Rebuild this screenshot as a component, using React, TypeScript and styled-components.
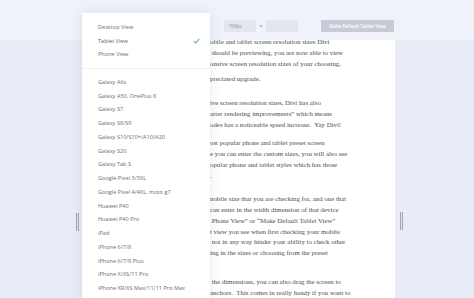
import React from "react";
import styled, {createGlobalStyle} from "styled-components";

const GlobalStyle = createGlobalStyle`
  html, body {
    margin: 0;
    padding: 0;
    width: 474px;
    height: 298px;
    overflow: hidden;
    background: #eef1f8;
  }
`

const Screen = styled.div`
  position: relative;
  width: 474px;
  height: 298px;
  display: flex;
  flex-direction: column;
  overflow: hidden;
  font-family: "Open Sans", "Liberation Sans", sans-serif;
`

const Toolbar = styled.div`
  flex: 0 0 40px;
  box-sizing: border-box;
  padding: 20px 0 0 224px;
  display: flex;
  align-items: flex-start;
  background: #eff2f8;
`

const SizeInput = styled.div`
  width: 32px;
  height: 12px;
  box-sizing: border-box;
  padding-left: 5px;
  display: flex;
  align-items: center;
  background: #e3e6ed;
  color: #8c909b;
  font-size: 4.5px;
`

const Times = styled.span`
  width: 10px;
  line-height: 12px;
  text-align: center;
  color: #7d818c;
  font-size: 6px;
`

const DefaultButton = styled.button`
  margin-left: 23px;
  width: 73px;
  height: 12px;
  padding: 0;
  border: 0;
  background: #c8cbd7;
  color: #ffffff;
  font-family: "Open Sans", "Liberation Sans", sans-serif;
  font-size: 4.6px;
  font-weight: 600;
`

const Stage = styled.div`
  flex: 1;
  min-height: 0;
  display: flex;
`

const Gutter = styled.div<{ $side: "left" | "right" }>`
  flex: ${p => p.$side === "left" ? "0 0 84px" : "1"};
  box-sizing: border-box;
  display: flex;
  align-items: flex-start;
  justify-content: ${p => p.$side === "left" ? "flex-end" : "flex-start"};
  padding: ${p => p.$side === "left" ? "173px 5px 0 0" : "172px 0 0 5px"};
  background: #e8ecf7;
`

const Handle = styled.div`
  width: 3px;
  height: 18px;
  box-sizing: border-box;
  border-left: 1px solid #a3a9b5;
  border-right: 1px solid #a3a9b5;
  background: #dde1ea;
`

const Frame = styled.div`
  flex: 0 0 311px;
  background: #ffffff;
`

const Article = styled.div`
  margin-top: -3px;
  padding-left: 126px;
  font-family: "Liberation Serif", "Times New Roman", serif;
  font-size: 6.85px;
  line-height: 10.9px;
  color: #4e4e4e;
`

const Paragraph = styled.p<{ $gap: number }>`
  margin: ${p => p.$gap}px 0 0;
  white-space: pre;
`

const Dropdown = styled.div`
  position: absolute;
  left: 82px;
  top: 13px;
  bottom: -10px;
  width: 128px;
  box-sizing: border-box;
  padding-top: 7px;
  background: #ffffff;
  box-shadow: 0 0 10px rgba(60, 80, 130, 0.12);
`

const Item = styled.div<{ $active?: boolean }>`
  height: 13.75px;
  box-sizing: border-box;
  padding: 0 10px 0 16px;
  display: flex;
  align-items: center;
  font-size: 5.6px;
  color: ${p => p.$active ? "#626262" : "#6e6e6e"};
  white-space: nowrap;
`

const Check = styled.svg`
  margin-left: auto;
  width: 7px;
  height: 6px;
`

const Divider = styled.div`
  height: 1px;
  margin: 6.4px 0 6.35px;
  background: #f0f1f3;
`

const views = ["Desktop View", "Tablet View", "Phone View"]

const devices = [
    "Galaxy A6s",
    "Galaxy A50, OnePlus 8",
    "Galaxy S7",
    "Galaxy S8/S9",
    "Galaxy S10/S10+/A10/A20",
    "Galaxy S20",
    "Galaxy Tab S",
    "Google Pixel 3/3XL",
    "Google Pixel 4/4XL, moto g7",
    "Huawei P40",
    "Huawei P40 Pro",
    "iPad",
    "iPhone 6/7/8",
    "iPhone 6/7/8 Plus",
    "iPhone X/XS/11 Pro",
    "iPhone XR/XS Max/11/11 Pro Max",
]

const paragraphs: { gap: number, lines: string[] }[] = [
    {
        gap: 0, lines: [
            "obile and tablet screen resolution sizes Divi",
            " should be previewing, you are now able to view",
            "onsive screen resolution sizes of your choosing.",
        ]
    },
    {gap: 4.4, lines: ["preciated upgrade."]},
    {
        gap: 13.1, lines: [
            "ive screen resolution sizes, Divi has also",
            "arter rendering improvements\u201d which means",
            "odes has a noticeable speed increase.  Yay Divi!",
        ]
    },
    {
        gap: 7.3, lines: [
            "ost popular phone and tablet preset screen",
            "e you can enter the custom sizes, you will also see",
            "opular phone and tablet styles which has those",
            ".",
        ]
    },
    {
        gap: 12.1, lines: [
            "nobile size that you are checking for, and one that",
            "can enter in the width dimension of that device",
            " Phone View\u201d or \u201cMake Default Tablet View\u201d",
            "t view you see when first checking your mobile",
            " not in any way hinder your ability to check other",
            "ing in the sizes or choosing from the preset",
        ]
    },
    {
        gap: 17.9, lines: [
            " the dimensions, you can also drag the screen to",
            "anchors.  This comes in really handy if you want to",
        ]
    },
]

function App() {
    return (
        <Screen>
            <GlobalStyle/>
            <Toolbar>
                <SizeInput>768px</SizeInput>
                <Times>×</Times>
                <SizeInput/>
                <DefaultButton>Make Default Tablet View</DefaultButton>
            </Toolbar>
            <Stage>
                <Gutter $side="left"><Handle/></Gutter>
                <Frame>
                    <Article>
                        {paragraphs.map((p, i) => (
                            <Paragraph $gap={p.gap} key={i}>
                                {p.lines.join("\n")}
                            </Paragraph>
                        ))}
                    </Article>
                </Frame>
                <Gutter $side="right"><Handle/></Gutter>
            </Stage>
            <Dropdown>
                {views.map(v => (
                    <Item key={v} $active={v === "Tablet View"}>
                        {v}
                        {v === "Tablet View" &&
                            <Check viewBox="0 0 7 6">
                                <path d="M0.8 3.2 L2.7 5 L6.2 0.9" fill="none" stroke="#62b866" strokeWidth="1.1"/>
                            </Check>
                        }
                    </Item>
                ))}
                <Divider/>
                {devices.map(d => <Item key={d}>{d}</Item>)}
            </Dropdown>
        </Screen>
    );
}

export default App
